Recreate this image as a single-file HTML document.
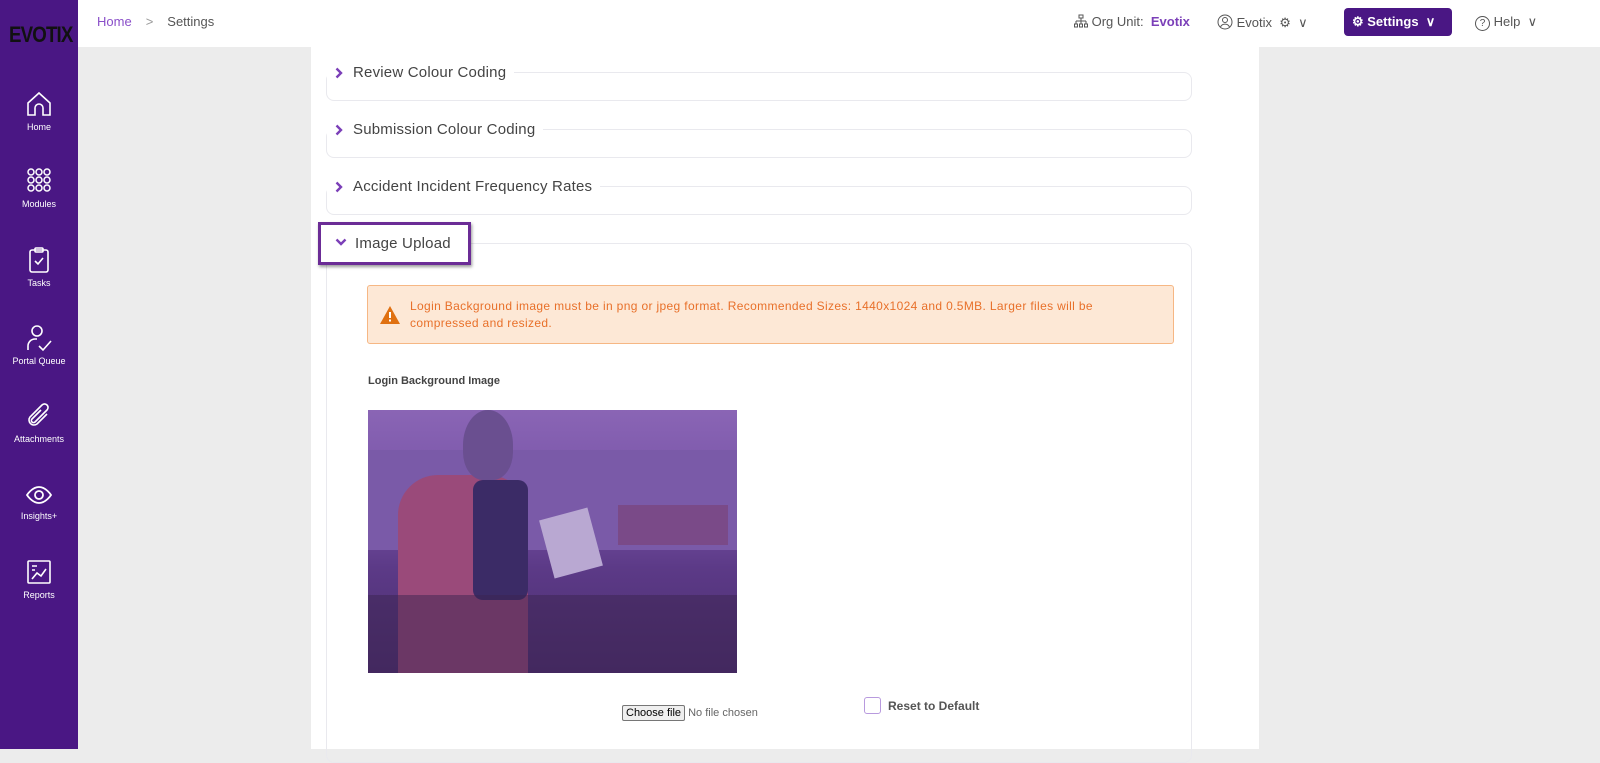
<!DOCTYPE html>
<html><head><style>
*{box-sizing:border-box;margin:0;padding:0}
body{width:1600px;height:749px;overflow:hidden;background:#ececec;font-family:"Liberation Sans",sans-serif;position:relative}
.side{position:absolute;left:0;top:0;width:78px;height:749px;background:#4a1784}
.logo{position:absolute;left:9px;top:22px;font-weight:bold;font-size:22px;color:#111;letter-spacing:-1px;transform:scaleX(.85);transform-origin:left}
.nav{position:absolute;left:0;width:78px;text-align:center;color:#fff;font-size:9px}
.nav svg{display:block;margin:0 auto 4px}
.top{position:absolute;left:78px;top:0;width:1522px;height:47px;background:#fff}
.panel{position:absolute;left:311px;top:47px;width:948px;height:702px;background:#fff}
.acc{position:absolute;left:326px;width:866px;border:1px solid #e9e9ee;border-radius:8px;height:29px}
.acc .t{position:absolute;left:0;top:-11px;height:22px;line-height:22px;background:#fff;padding:0 8px;font-size:15px;color:#444;display:flex;align-items:center;letter-spacing:.2px}
.acc .t svg{margin-right:10px}
</style></head><body>
<div class="side">
 <div class="logo">EVOTIX</div>
 <div class="nav" style="top:90px"><svg width="28" height="28" viewBox="0 0 28 28" fill="none" stroke="#fff" stroke-width="1.6"><path d="M3 13L14 3l11 10v12h-7v-7a4 4 0 0 0-8 0v7H3z"/></svg>Home</div>
 <div class="nav" style="top:167px"><svg width="26" height="28" viewBox="0 0 26 28" fill="none" stroke="#fff" stroke-width="1.5"><circle cx="5" cy="5" r="3"/><circle cx="13" cy="5" r="3"/><circle cx="21" cy="5" r="3"/><circle cx="5" cy="13" r="3"/><circle cx="13" cy="13" r="3"/><circle cx="21" cy="13" r="3"/><circle cx="5" cy="21" r="3"/><circle cx="13" cy="21" r="3"/><circle cx="21" cy="21" r="3"/></svg>Modules</div>
 <div class="nav" style="top:246px"><svg width="24" height="28" viewBox="0 0 24 28" fill="none" stroke="#fff" stroke-width="1.6"><rect x="3" y="4" width="18" height="22" rx="2"/><rect x="8" y="2" width="8" height="4" rx="1"/><path d="M8 15l3 3 5-6"/></svg>Tasks</div>
 <div class="nav" style="top:324px"><svg width="30" height="28" viewBox="0 0 30 28" fill="none" stroke="#fff" stroke-width="1.6"><circle cx="13" cy="7" r="5"/><path d="M4 26v-4a7 7 0 0 1 7-7h2M15 22l4 4 8-9"/></svg>Portal Queue</div>
 <div class="nav" style="top:402px"><svg width="28" height="28" viewBox="0 0 28 28" fill="none" stroke="#fff" stroke-width="1.6"><path d="M22 12L12 22a5 5 0 0 1-7-7L17 3a3.5 3.5 0 0 1 5 5L10 20a2 2 0 0 1-3-3l9-9"/></svg>Attachments</div>
 <div class="nav" style="top:483px"><svg width="28" height="24" viewBox="0 0 28 24" fill="none" stroke="#fff" stroke-width="1.8"><path d="M2 12s5-8 12-8 12 8 12 8-5 8-12 8S2 12 2 12z"/><circle cx="14" cy="12" r="4"/></svg>Insights+</div>
 <div class="nav" style="top:558px"><svg width="28" height="28" viewBox="0 0 28 28" fill="none" stroke="#fff" stroke-width="1.6"><rect x="3" y="3" width="22" height="22" rx="1"/><path d="M7 8h5M7 12h3M7 21l5-6 4 3 5-7"/></svg>Reports</div>
</div>
<div class="top">
 <div style="position:absolute;left:19px;top:14px;font-size:13px"><span style="color:#8a4fc9">Home</span><span style="color:#999;margin:0 14px">&gt;</span><span style="color:#555">Settings</span></div>
 <div style="position:absolute;left:996px;top:14px;font-size:13px;color:#555">
  <svg width="14" height="14" viewBox="0 0 14 14" fill="none" stroke="#555" style="vertical-align:-2px"><rect x="5" y="1" width="4" height="3"/><path d="M7 4v3M2 7h10M2 7v3M7 7v3M12 7v3"/><rect x="0.5" y="10" width="3" height="3"/><rect x="5.5" y="10" width="3" height="3"/><rect x="10.5" y="10" width="3" height="3"/></svg>
  Org Unit: &nbsp;<b style="color:#7b3fb8">Evotix</b></div>
 <div style="position:absolute;left:1139px;top:14px;font-size:13px;color:#555"><svg width="16" height="16" viewBox="0 0 16 16" fill="none" stroke="#555" style="vertical-align:-3px"><circle cx="8" cy="8" r="7"/><circle cx="8" cy="6" r="2.5"/><path d="M3.5 13a5 5 0 0 1 9 0"/></svg> Evotix &nbsp;⚙ &nbsp;&#8744;</div>
 <div style="position:absolute;left:1266px;top:8px;width:108px;height:28px;background:#4a1784;border-radius:4px;color:#fff;font-size:13px;font-weight:bold;padding:6px 8px">⚙ Settings &nbsp;&#8744;</div>
 <div style="position:absolute;left:1397px;top:14px;font-size:13px;color:#555"><span style="display:inline-block;width:15px;height:15px;border:1px solid #555;border-radius:50%;font-size:10px;text-align:center;line-height:13px">?</span> Help &nbsp;&#8744;</div>
</div>
<div class="panel"></div>
<div class="acc" style="top:72px"><div class="t"><svg width="8" height="12" viewBox="0 0 8 12"><path d="M1.5 1.5l4.5 4.5-4.5 4.5" fill="none" stroke="#7b3fb8" stroke-width="2.4"/></svg>Review Colour Coding</div></div>
<div class="acc" style="top:129px"><div class="t"><svg width="8" height="12" viewBox="0 0 8 12"><path d="M1.5 1.5l4.5 4.5-4.5 4.5" fill="none" stroke="#7b3fb8" stroke-width="2.4"/></svg>Submission Colour Coding</div></div>
<div class="acc" style="top:186px"><div class="t"><svg width="8" height="12" viewBox="0 0 8 12"><path d="M1.5 1.5l4.5 4.5-4.5 4.5" fill="none" stroke="#7b3fb8" stroke-width="2.4"/></svg>Accident Incident Frequency Rates</div></div>
<div style="position:absolute;left:326px;top:243px;width:866px;height:520px;border:1px solid #e9e9ee;border-radius:8px"></div>
<div style="position:absolute;left:318px;top:222px;width:153px;height:43px;border:3px solid #6b2c96;background:#fff;box-shadow:1px 2px 3px rgba(0,0,0,.4);font-size:15px;color:#444;padding:10px 0 0 14px;letter-spacing:.2px"><svg width="12" height="8" viewBox="0 0 12 8" style="margin-right:8px;vertical-align:2px"><path d="M1.5 1.5l4.5 4.5 4.5-4.5" fill="none" stroke="#7b3fb8" stroke-width="2.4"/></svg>Image Upload</div>
<div style="position:absolute;left:367px;top:285px;width:807px;height:59px;background:#fde8d6;border:1px solid #f6b784;border-radius:3px;color:#e8702a;font-size:12px;line-height:17px;padding:12px 70px 0 42px;letter-spacing:.35px">
 <svg width="22" height="20" viewBox="0 0 22 20" style="position:absolute;left:11px;top:19px"><path d="M11 1L21 19H1z" fill="#e07010"/><rect x="10" y="7" width="2" height="6" fill="#fff"/><rect x="10" y="14.5" width="2" height="2" fill="#fff"/></svg>
 Login Background image must be in png or jpeg format. Recommended Sizes: 1440x1024 and 0.5MB. Larger files will be compressed and resized.</div>
<div style="position:absolute;left:368px;top:375px;font-size:11px;font-weight:bold;color:#444">Login Background Image</div>
<div style="position:absolute;left:368px;top:410px;width:369px;height:263px;background:linear-gradient(180deg,#8a65b5 0%,#7652a6 35%,#5c3a87 60%,#4a2d6e 100%);overflow:hidden">
 <div style="position:absolute;left:0;top:40px;width:369px;height:100px;background:#7a5aa8"></div>
 <div style="position:absolute;left:250px;top:95px;width:110px;height:40px;background:#7a4a88"></div>
 <div style="position:absolute;left:30px;top:65px;width:130px;height:200px;background:#9a4a7a;border-radius:40px 40px 0 0"></div>
 <div style="position:absolute;left:105px;top:70px;width:55px;height:120px;background:#3b2b66;border-radius:10px"></div>
 <div style="position:absolute;left:95px;top:0;width:50px;height:70px;background:#6a4f90;border-radius:50% 50% 40% 40%"></div>
 <div style="position:absolute;left:178px;top:103px;width:50px;height:60px;background:#b9a8d2;transform:rotate(-15deg)"></div>
 <div style="position:absolute;left:0;top:185px;width:369px;height:78px;background:rgba(60,35,80,.5)"></div>
</div>
<div style="position:absolute;left:622px;top:705px;font-size:11px;color:#666"><span style="display:inline-block;border:1px solid #767676;background:#efefef;color:#000;padding:1px 3px;border-radius:2px">Choose file</span> No file chosen</div>
<div style="position:absolute;left:864px;top:697px;width:17px;height:17px;border:1.5px solid #b89ade;border-radius:3px"></div>
<div style="position:absolute;left:888px;top:699px;font-size:12px;font-weight:bold;color:#555">Reset to Default</div>
</body></html>
